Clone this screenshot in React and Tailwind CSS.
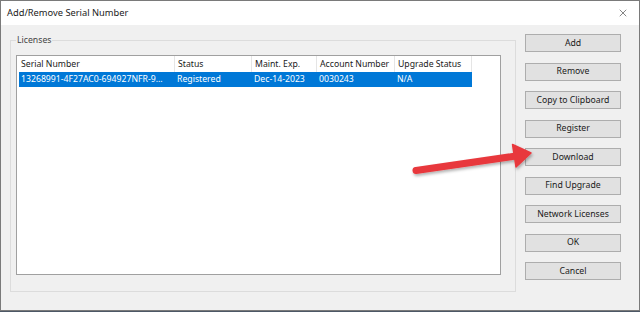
import { X } from 'lucide-react'

const COLS = [
  { label: 'Serial Number', w: 'w-[157px]' },
  { label: 'Status', w: 'w-[77px]' },
  { label: 'Maint. Exp.', w: 'w-[65px]' },
  { label: 'Account Number', w: 'w-[78px]' },
  { label: 'Upgrade Status', w: 'w-[77px]' },
]

const ROW = ['13268991-4F27AC0-694927NFR-9...', 'Registered', 'Dec-14-2023', '0030243', 'N/A']

const BUTTONS = ['Add', 'Remove', 'Copy to Clipboard', 'Register', 'Download', 'Find Upgrade', 'Network Licenses', 'OK', 'Cancel']

function Arrow() {
  return (
    <svg className="absolute left-0 top-0 pointer-events-none" width="640" height="312" viewBox="0 0 640 312">
      <defs>
        <filter id="sh" x="-10%" y="-50%" width="120%" height="200%">
          <feDropShadow dx="1" dy="2" stdDeviation="1.5" floodColor="#000" floodOpacity="0.3" />
        </filter>
      </defs>
      <g filter="url(#sh)" fill="#e8393d" stroke="#e8393d">
        <line x1="416" y1="170.5" x2="516" y2="156" strokeWidth="7" strokeLinecap="round" />
        <polygon points="531,153 512.5,144.5 516,167" strokeWidth="1.5" strokeLinejoin="round" />
      </g>
    </svg>
  )
}

export default function App() {
  return (
    <div className="relative w-[640px] h-[312px] bg-[#4d5866] font-['Noto_Sans',sans-serif] text-[#1a1a1a]">
      <div className="h-[311px] border border-[#7a7a7a] bg-[#f0f0f0] flex flex-col">
        {/* title bar */}
        <div className="h-[24px] bg-white flex items-center justify-between pl-[6px] pr-[10px]">
          <span className="text-[9.3px] leading-none">Add/Remove Serial Number</span>
          <X size={12} strokeWidth={1.2} className="text-[#333]" />
        </div>

        <div className="flex flex-1">
          {/* Licenses group */}
          <div className="relative ml-[9px] mt-[15px] w-[506px] h-[252px] border border-[#dcdcdc]">
            <span className="absolute -top-[7px] left-[5px] px-[1px] bg-[#f0f0f0] text-[8.7px] leading-[12px] text-[#444]">
              Licenses
            </span>
            <div className="ml-[5px] mt-[14px] w-[485px] h-[220px] border border-[#a0a0a0] bg-white">
              <div className="flex h-[16px] ml-[1px]">
                {COLS.map((c) => (
                  <div key={c.label} className={`${c.w} border-r border-[#e5e5e5] pl-[3px] text-[8.7px] leading-[16px] whitespace-nowrap`}>
                    {c.label}
                  </div>
                ))}
              </div>
              <div className="flex h-[15px] ml-[2px] w-[453px] bg-[#0078d7] text-white">
                {COLS.map((c, i) => (
                  <div key={c.label} className={`${i === 0 ? 'w-[156px]' : c.w} pl-[2px] text-[8.7px] leading-[15px] whitespace-nowrap overflow-hidden`}>
                    {ROW[i]}
                  </div>
                ))}
              </div>
            </div>
          </div>

          {/* buttons */}
          <div className="ml-[9px] pt-[9px] flex flex-col gap-[10.5px]">
            {BUTTONS.map((b) => (
              <button
                key={b}
                className="w-[96px] h-[18px] bg-[#e1e1e1] border border-[#adadad] text-[8.7px] leading-none text-[#1a1a1a]"
              >
                {b}
              </button>
            ))}
          </div>
        </div>
      </div>
      <Arrow />
    </div>
  )
}
